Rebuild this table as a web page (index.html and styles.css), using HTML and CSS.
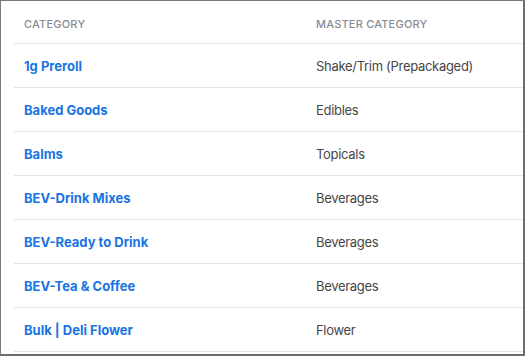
FILE: index.html
```html
<!DOCTYPE html>
<html lang="en">
<head>
    <meta charset="UTF-8">
    <meta name="viewport" content="width=device-width, initial-scale=1.0">
    <title>Categories</title>
    <link rel="stylesheet" href="styles.css">
</head>
<body>
    <div class="panel">
        <table class="category-table">
            <thead>
                <tr>
                    <th class="col-name">Category</th>
                    <th>Master Category</th>
                </tr>
            </thead>
            <tbody>
                <tr><td class="col-name"><a href="#">1g Preroll</a></td><td>Shake/Trim (Prepackaged)</td></tr>
                <tr><td class="col-name"><a href="#">Baked Goods</a></td><td>Edibles</td></tr>
                <tr><td class="col-name"><a href="#">Balms</a></td><td>Topicals</td></tr>
                <tr><td class="col-name"><a href="#">BEV-Drink Mixes</a></td><td>Beverages</td></tr>
                <tr><td class="col-name"><a href="#">BEV-Ready to Drink</a></td><td>Beverages</td></tr>
                <tr><td class="col-name"><a href="#">BEV-Tea &amp; Coffee</a></td><td>Beverages</td></tr>
                <tr><td class="col-name"><a href="#">Bulk | Deli Flower</a></td><td>Flower</td></tr>
            </tbody>
        </table>
    </div>
</body>
</html>
```

FILE: styles.css
```css
* {
    margin: 0;
    padding: 0;
    box-sizing: border-box;
}

body {
    font-family: Inter, 'Noto Sans', sans-serif;
    background: white;
    width: 525px;
    height: 356px;
    overflow: hidden;
}

.panel {
    width: 525px;
    height: 356px;
    border-top: 1px solid #7a7a7a;
    border-left: 1px solid #7a7a7a;
    border-right: 2px solid #6e6e6e;
    border-bottom: 2px solid #6e6e6e;
    padding-left: 13px;
    overflow: hidden;
}

.category-table {
    width: 100%;
    border-collapse: collapse;
}

.category-table th,
.category-table td {
    text-align: left;
    border-bottom: 1px solid #e4e4e4;
    padding: 0 10px;
    vertical-align: middle;
}

.category-table th {
    height: 42px;
    padding-top: 5px;
    font-size: 11px;
    font-weight: 500;
    letter-spacing: 0.2px;
    text-transform: uppercase;
    color: #878c92;
}

.category-table td {
    height: 44px;
    padding-top: 2px;
    font-size: 13px;
    letter-spacing: -0.3px;
    color: #464646;
}

.category-table .col-name {
    width: 292px;
}

.category-table a {
    color: #1a73e3;
    font-weight: 700;
    letter-spacing: 0;
    text-decoration: none;
}
```
